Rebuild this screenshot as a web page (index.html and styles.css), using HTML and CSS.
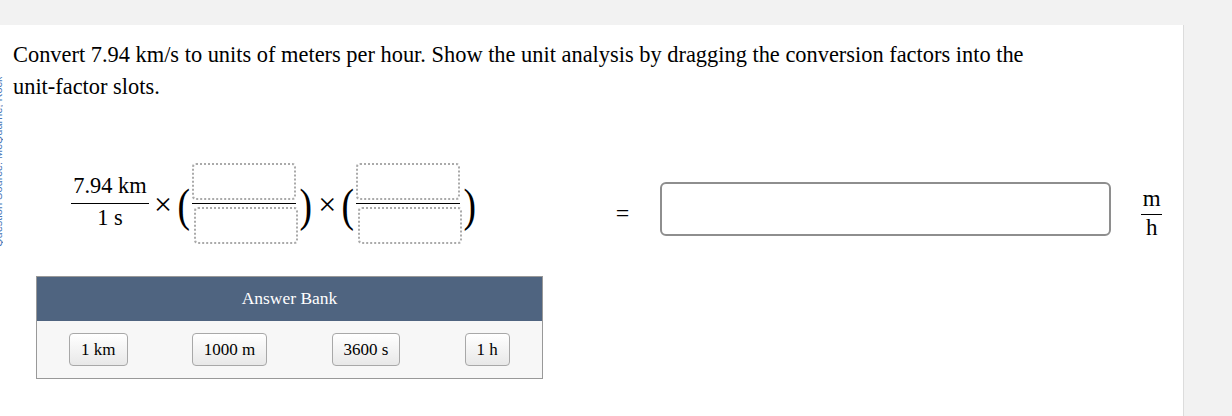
FILE: index.html
```html
<!DOCTYPE html>
<html lang="en">
<head>
  <meta charset="UTF-8">
  <meta name="viewport" content="width=device-width, initial-scale=1.0">
  <title>Unit Conversion</title>
  <link rel="stylesheet" href="styles.css">
</head>
<body>
  <div class="panel">
    <div class="side-label">Question Source: McQuarrie, Rock, and Gallogly 4e - General Chemistry</div>

    <p class="question">Convert 7.94 km/s to units of meters per hour. Show the unit analysis by dragging the conversion factors into the unit-factor slots.</p>

    <div class="equation">
      <div class="fraction given">
        <span class="num">7.94 km</span>
        <span class="bar"></span>
        <span class="den">1 s</span>
      </div>
      <span class="times">×</span>
      <span class="paren">(</span>
      <div class="factor">
        <div class="slot"></div>
        <span class="bar"></span>
        <div class="slot"></div>
      </div>
      <span class="paren">)</span>
      <span class="times">×</span>
      <span class="paren">(</span>
      <div class="factor">
        <div class="slot"></div>
        <span class="bar"></span>
        <div class="slot"></div>
      </div>
      <span class="paren">)</span>

      <div class="result">
        <span class="equals">=</span>
        <div class="answer-box"></div>
        <div class="fraction unit">
          <span class="num">m</span>
          <span class="bar"></span>
          <span class="den">h</span>
        </div>
      </div>
    </div>

    <div class="answer-bank">
      <div class="bank-title">Answer Bank</div>
      <div class="bank-items">
        <span class="chip">1 km</span>
        <span class="chip">1000 m</span>
        <span class="chip">3600 s</span>
        <span class="chip">1 h</span>
      </div>
    </div>
  </div>
</body>
</html>
```

FILE: styles.css
```css
* {
  box-sizing: border-box;
  margin: 0;
  padding: 0;
}

body {
  font-family: "Liberation Serif", "Times New Roman", serif;
  background-color: #f2f2f2;
  color: #000;
  overflow: hidden;
}

.panel {
  position: relative;
  width: 1184px;
  min-height: 391px;
  margin-top: 25px;
  padding: 14px 0 0 13px;
  background: #fff;
  border-right: 1px solid #dcdcdc;
  overflow: hidden;
}

/* vertical source label, mostly hidden behind the left edge */
.side-label {
  position: absolute;
  left: -7px;
  top: 52px;
  width: 10px;
  height: 170px;
  writing-mode: vertical-rl;
  transform: rotate(180deg);
  font-family: "Liberation Sans", Arial, sans-serif;
  font-size: 11px;
  line-height: 10px;
  color: #4a78b8;
  white-space: nowrap;
  overflow: hidden;
}

.question {
  font-size: 22.4px;
  line-height: 32px;
  max-width: 1040px;
}

/* equation row */
.equation {
  display: flex;
  align-items: center;
  height: 83px;
  margin-top: 59px;
  padding-left: 58px;
}

.fraction {
  display: flex;
  flex-direction: column;
  align-items: center;
  font-size: 22.4px;
}

.fraction .num {
  line-height: 22px;
  padding-bottom: 6px;
}

.fraction .den {
  line-height: 22px;
  padding: 3px 0 3px;
}

.bar {
  display: block;
  align-self: stretch;
  height: 1px;
  background: #000;
}

.given {
  width: 78px;
}

.times {
  font-size: 32px;
  line-height: 30px;
  margin: 0 4px 0 5px;
}

.paren {
  font-size: 47px;
  line-height: 50px;
  font-weight: 300;
  transform: scaleX(0.8);
  margin-top: 2px;
}

.factor {
  display: flex;
  flex-direction: column;
  gap: 3px;
  width: 106px;
}

.factor .bar {
  margin: 0 2px 0 0;
}

.slot {
  height: 37px;
  border: 2px dotted #aaa;
  border-radius: 4px;
}

.factor .slot:first-child {
  margin-right: 2px;
}

.factor .slot:last-child {
  margin-left: 2px;
}

.result {
  display: flex;
  align-items: center;
  padding-top: 10px;
  margin-left: 138px;
}

.equals {
  font-size: 24px;
  line-height: 24px;
  margin-top: 8px;
}

.answer-box {
  width: 451px;
  height: 54px;
  margin-left: 31px;
  border: 2px solid #8e8e8e;
  border-radius: 6px;
}

.unit {
  margin: 10px 0 0 30px;
  width: 21px;
  font-size: 23px;
}

.unit .num {
  line-height: 22px;
  padding-bottom: 4px;
}

.unit .den {
  line-height: 22px;
  padding: 2px 0 0;
}

/* answer bank */
.answer-bank {
  width: 507px;
  margin: 31px 0 0 23px;
  border: 1px solid #999;
  background: #f7f7f7;
}

.bank-title {
  height: 44px;
  line-height: 43px;
  text-align: center;
  font-size: 17.5px;
  color: #fff;
  background: #4f6480;
}

.bank-items {
  display: flex;
  align-items: center;
  justify-content: space-around;
  height: 57px;
}

.chip {
  height: 33px;
  line-height: 31px;
  padding: 0 11px;
  font-size: 17px;
  border: 1px solid #a8a8a8;
  border-radius: 4px;
  background: linear-gradient(#ffffff, #e8e8e8);
}
```
